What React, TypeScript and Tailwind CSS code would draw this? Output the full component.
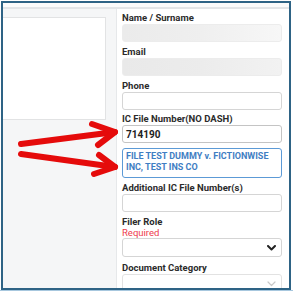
import React from "react";

function Label({ children }: { children: React.ReactNode }) {
  return (
    <p className="h-[12px] shrink-0 whitespace-nowrap text-[9.5px] font-bold leading-[12px] text-[#2b2b2b]">
      {children}
    </p>
  );
}

function Chevron({ faint }: { faint?: boolean }) {
  return (
    <svg
      width="9"
      height="6"
      viewBox="0 0 9 6"
      className="absolute right-[5px] top-1/2 -translate-y-1/2"
      aria-hidden
    >
      <polyline
        points="1,1 4.5,4.5 8,1"
        fill="none"
        stroke={faint ? "#c9c9c9" : "#222"}
        strokeWidth={faint ? 1.2 : 2}
        strokeLinecap="round"
        strokeLinejoin="round"
      />
    </svg>
  );
}

function Arrows() {
  return (
    <svg
      width="130"
      height="70"
      viewBox="0 110 130 70"
      className="pointer-events-none absolute left-0 top-[110px]"
      aria-hidden
    >
      <g
        fill="none"
        stroke="#e50b0b"
        strokeWidth="6"
        strokeLinecap="round"
        strokeLinejoin="round"
      >
        <polyline points="21,144 115,132" />
        <polyline points="92,124 115,132 98,145" />
        <polyline points="21,154 115,167" />
        <polyline points="99,155 115,167 94,174" />
      </g>
    </svg>
  );
}

export default function App() {
  return (
    <div className="relative h-[291px] w-[293px] overflow-hidden bg-white pt-[1px] font-['Roboto','Liberation_Sans',sans-serif]">
      <div className="ml-[1px] flex h-[289px] w-[290px] flex-col overflow-hidden border-2 border-[#2e6385]">
        <div className="h-[4px] shrink-0 bg-[#fbfbfb]" />
        <div className="h-[2px] shrink-0 bg-[#e3e5e7]" />
        <div className="flex min-h-0 flex-1 overflow-hidden">
          {/* left pane */}
          <div className="flex w-[114px] shrink-0 flex-col border-r border-[#e6e8ea] bg-[#f5f6f7]">
            <div className="h-[8px] shrink-0" />
            <div className="h-[103px] w-[103px] shrink-0 border border-l-0 border-[#e2e3e4] bg-white" />
          </div>
          {/* right pane */}
          <div className="flex flex-1 flex-col bg-white pl-[5px] pr-[7px] pt-[3px]">
            <Label>Name / Surname</Label>
            <div className="h-[18px] shrink-0 rounded-[3px] border border-[#ececec] bg-gradient-to-r from-[#ebebeb] via-[#efefef] to-[#f7f7f7] blur-[0.6px]" />

            <div className="mt-[4px]">
              <Label>Email</Label>
            </div>
            <div className="h-[18px] shrink-0 rounded-[3px] border border-[#ececec] bg-gradient-to-r from-[#e9e9e9] via-[#ececec] to-[#f2f2f2] blur-[0.6px]" />

            <div className="mt-[4px]">
              <Label>Phone</Label>
            </div>
            <div className="h-[18px] shrink-0 rounded-[3px] border border-[#d5d5d5] bg-white" />

            <div className="mt-[3px]">
              <Label>IC File Number(NO DASH)</Label>
            </div>
            <div className="flex h-[18px] shrink-0 items-center rounded-[3px] border border-[#c4c4c4] bg-white px-[3px] text-[10px] font-bold text-[#222]">
              714190
            </div>

            <div className="mt-[5px] h-[30px] shrink-0 rounded-[3px] border-[1.5px] border-[#5c9ad6] bg-white px-[3px] pt-[2px] text-[9px] font-bold leading-[11px] text-[#3f7ec3]">
              FILE TEST DUMMY v. FICTIONWISE
              <br />
              INC, TEST INS CO
            </div>

            <div className="mt-[4px]">
              <Label>Additional IC File Number(s)</Label>
            </div>
            <div className="h-[18px] shrink-0 rounded-[3px] border border-[#d5d5d5] bg-white" />

            <div className="mt-[4px]">
              <Label>Filer Role</Label>
            </div>
            <p className="h-[10px] shrink-0 text-[9.5px] leading-[10px] text-[#ee3b4e]">Required</p>
            <div className="relative h-[19px] shrink-0 rounded-[3px] border border-[#d5d5d5] bg-white">
              <Chevron />
            </div>

            <div className="mt-[5px]">
              <Label>Document Category</Label>
            </div>
            <div className="relative h-[19px] shrink-0 rounded-[3px] border border-[#e2e2e2] bg-white">
              <Chevron faint />
            </div>
          </div>
        </div>
      </div>
      <div className="h-[1px] bg-[#a7c7de]" />
      <Arrows />
    </div>
  );
}
